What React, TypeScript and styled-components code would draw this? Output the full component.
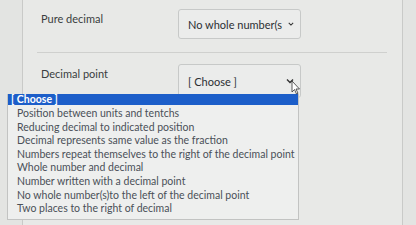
import React from 'react'
import styled, { createGlobalStyle } from 'styled-components'

const Global = createGlobalStyle`
    html, body { margin: 0; padding: 0; }
    body {
        background: #e3e4e2;
        font-family: Lato, "Open Sans", sans-serif;
        width: 416px; height: 225px; overflow: hidden;
    }
`

const Page = styled.div`
    position: relative;
    height: 225px;
    padding-left: 22px;
    padding-right: 13px;
`

const Panel = styled.div`
    height: 225px;
    border-left: 1px solid #c9cac8;
    border-right: 1px solid #c9cac8;
    background: #e8e9e7;
    padding: 9px 15px 0 14px;
    box-sizing: border-box;
`

const Row = styled.div<{ $gap: number }>`
    display: grid;
    grid-template-columns: 137px 123px;
    align-items: start;
    padding-left: 4px;
    margin-bottom: ${ p => p.$gap }px;
`

const Label = styled.div`
    font-size: 11px;
    color: #3a3d40;
    padding-top: 3px;
`

const SelectBox = styled.div<{ $h: number }>`
    height: ${ p => p.$h }px;
    box-sizing: border-box;
    border: 1px solid #c7c9c8;
    border-radius: 3px;
    background: #ebeceb;
    display: flex;
    align-items: center;
    gap: 6px;
    padding: 0 6px 0 9px;
    font-size: 11px;
    color: #2c2f33;
    white-space: nowrap;
`

const SelectText = styled.span`
    flex: 1;
`

const Divider = styled.div`
    height: 1px;
    background: #cfd0ce;
    margin: 0 0 11px 0;
`

const Menu = styled.ul`
    position: absolute;
    left: 7px; top: 94px;
    width: 292px;
    margin: 0; padding: 0 0 3px 0;
    list-style: none;
    background: #eeefee;
    border: 1px solid #c2c3c2;
    border-top: none;
    box-sizing: border-box;
`

const Option = styled.li<{ $active?: boolean }>`
    font-size: 10.5px;
    line-height: ${ p => p.$active ? 11 : 13.6 }px;
    height: ${ p => p.$active ? 11 : 13.6 }px;
    padding-left: ${ p => p.$active ? 3 : 9 }px;
    margin-bottom: ${ p => p.$active ? 2 : 0 }px;
    color: ${ p => p.$active ? '#ffffff' : '#4a5058' };
    background: ${ p => p.$active ? '#1c5ec9' : 'transparent' };
    font-weight: ${ p => p.$active ? 700 : 400 };
    white-space: nowrap;
`

const Chevron = () => <svg width="8" height="6" viewBox="0 0 8 6">
    <path d="M1 1.5 L4 4.5 L7 1.5" fill="none" stroke="#333" strokeWidth="1.4" />
</svg>

const Cursor = styled.svg`
    position: absolute;
    left: 291px; top: 80px;
`

const options = [
    'Position between units and tentchs',
    'Reducing decimal to indicated position',
    'Decimal represents same value as the fraction',
    'Numbers repeat themselves to the right of the decimal point',
    'Whole number and decimal',
    'Number written with a decimal point',
    'No whole number(s)to the left of the decimal point',
    'Two places to the right of decimal',
]

export default function App() {
    return <Page>
        <Global />
        <Panel>
            <Row $gap={ 13 }>
                <Label>Pure decimal</Label>
                <SelectBox $h={ 30 }>
                    <SelectText>No whole number(s</SelectText>
                    <Chevron />
                </SelectBox>
            </Row>
            <Divider />
            <Row $gap={ 0 }>
                <Label>Decimal point</Label>
                <SelectBox $h={ 34 }>
                    <SelectText>[ Choose ]</SelectText>
                    <Chevron />
                </SelectBox>
            </Row>
        </Panel>
        <Menu>
            <Option $active>[ Choose ]</Option>
            { options.map( o => <Option key={ o }>{ o }</Option> ) }
        </Menu>
        <Cursor width="10" height="15" viewBox="0 0 10 15">
            <path d="M1 1 L1 12 L3.5 9.5 L5.5 14 L7 13.3 L5 9 L8.5 9 Z" fill="#fff" stroke="#333" strokeWidth="0.8" />
        </Cursor>
    </Page>
}
